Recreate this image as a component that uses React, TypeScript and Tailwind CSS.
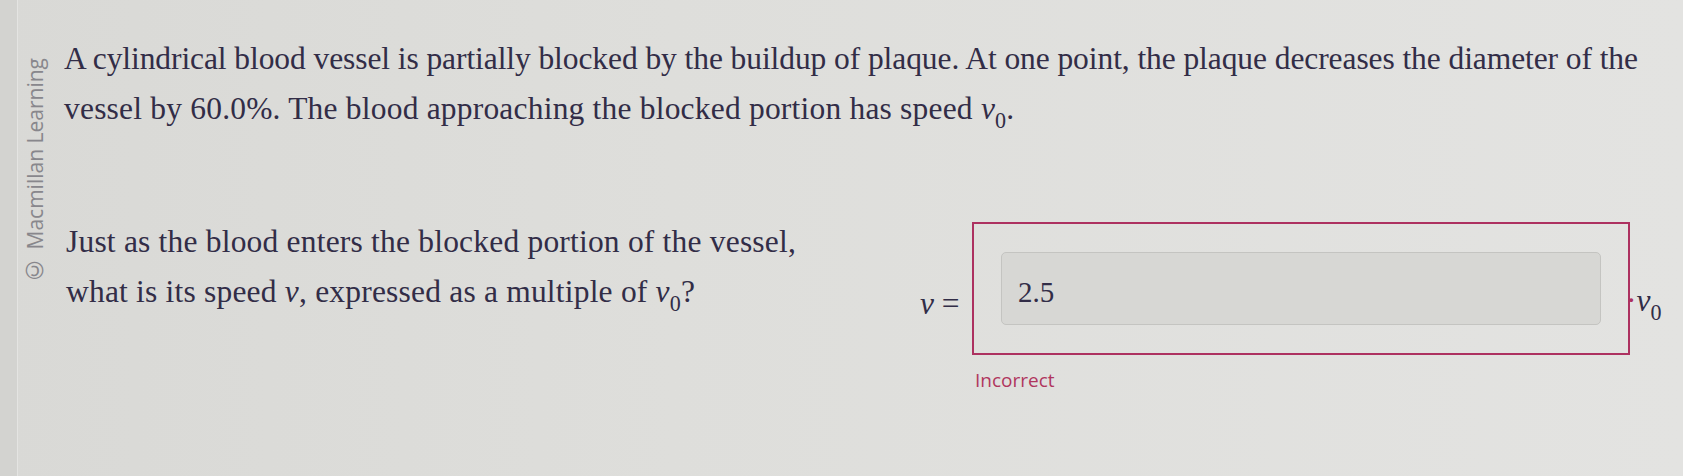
import React from 'react';

const serif = "font-['Liberation_Serif','Times_New_Roman',serif]";

function V0() {
  return (
    <span className="whitespace-nowrap">
      <span className="italic">v</span>
      <sub className="text-[0.7em] not-italic align-[-0.14em]">0</sub>
    </span>
  );
}

export default function App() {
  return (
    <div className="w-[1683px] h-[476px] flex overflow-hidden bg-[linear-gradient(90deg,#d9d9d6_0%,#dededb_40%,#e3e3e1_100%)] text-[#322d47]">
      {/* photo edge strip */}
      <div className="w-[18px] h-full bg-[#d3d3d0] border-r border-[#e4e4e2]" />

      {/* copyright */}
      <div className="w-[46px] h-full pt-[58px] pl-[6px]">
        <div className="[writing-mode:vertical-rl] rotate-180 font-['Open_Sans',sans-serif] text-[21px] leading-[21px] text-[#88878c] whitespace-nowrap">
          <span className="text-[24px]">©</span> Macmillan Learning
        </div>
      </div>

      {/* main content */}
      <div className={`flex-1 ${serif} text-[31.5px] leading-[50px]`}>
        <p className="pt-[34px]">
          <span className="tracking-[-0.08px]">
            A cylindrical blood vessel is partially blocked by the buildup of plaque. At one point, the plaque decreases the diameter of the
          </span>
          <br />
          <span className="tracking-[0.2px]">
            vessel by 60.0%. The blood approaching the blocked portion has speed <V0 />.
          </span>
        </p>

        <div className="mt-[83px] flex items-start">
          <p className="w-[856px] shrink-0 pl-[2px] tracking-[0.2px]">
            Just as the blood enters the blocked portion of the vessel,
            <br />
            what is its speed <span className="italic">v</span>, expressed as a multiple of <V0 />?
          </p>

          <span className="mt-[62px] w-[52px] shrink-0 whitespace-nowrap">
            <span className="italic">v</span> =
          </span>

          <div className="flex flex-col">
            <div className="flex items-start">
              <div className="mt-[5px] w-[658px] h-[133px] border-2 border-[#ad3160] px-[27px] py-[28px]">
                <div className="h-full rounded-[5px] border border-[#c4c4c1] bg-[#d7d7d4] pl-[16px] flex items-center">
                  <span className="text-[29px] pt-[6px]">2.5</span>
                </div>
              </div>
              <span className="mt-[59px] -ml-[4px] whitespace-nowrap">
                <span className="text-[#ad3160]">·</span>
                <V0 />
              </span>
            </div>
            <div className="mt-[13px] pl-[3px] font-['Open_Sans',sans-serif] text-[19px] leading-[24px] text-[#b0365e]">
              Incorrect
            </div>
          </div>
        </div>
      </div>
    </div>
  );
}
